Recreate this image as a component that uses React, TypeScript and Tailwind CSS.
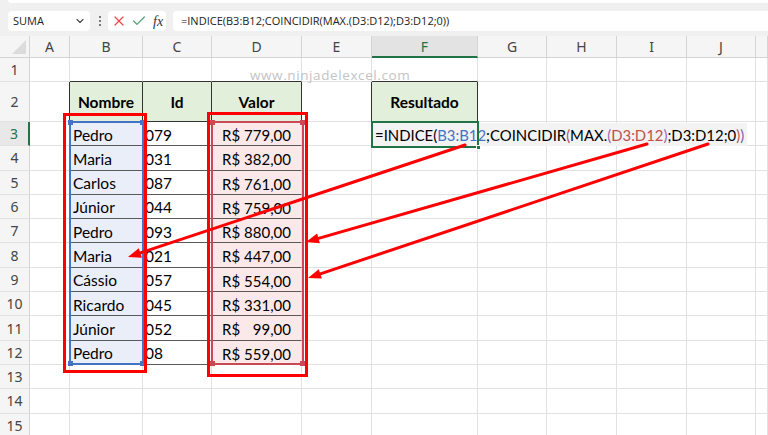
import { X, Check, ChevronDown } from "lucide-react"

const colWidths = [30, 40, 73, 69, 90, 70, 106, 69, 70, 70, 69, 12]
const letters = ["", "A", "B", "C", "D", "E", "F", "G", "H", "I", "J", ""]

const names = ["Pedro", "Maria", "Carlos", "Júnior", "Pedro", "Maria", "Cássio", "Ricardo", "Júnior", "Pedro"]
const ids = ["079", "031", "087", "044", "093", "021", "057", "045", "052", "08"]
const values = ["779,00", "382,00", "761,00", "759,00", "880,00", "447,00", "554,00", "331,00", "99,00", "559,00"]

function arrowHead(x1: number, y1: number, x2: number, y2: number, len = 13, w = 5) {
  const a = Math.atan2(y2 - y1, x2 - x1)
  const bx = x2 - len * Math.cos(a)
  const by = y2 - len * Math.sin(a)
  const px = -Math.sin(a) * w
  const py = Math.cos(a) * w
  return {
    base: [bx, by],
    points: `${x2},${y2} ${bx + px},${by + py} ${bx - px},${by - py}`,
  }
}

const arrows = [
  [465, 145, 128, 257],
  [647, 144, 306, 242],
  [708, 144, 308, 278],
]

function RowHeader({ n, h, active }: { n: number; h: string; active?: boolean }) {
  return (
    <div
      className={`${h} w-[30px] shrink-0 flex items-center justify-center border-b border-[#e1e1e1] text-[14px] font-['Noto_Sans',sans-serif] ${
        active ? "bg-[#e8e8e8] text-[#217346] border-r-2 border-r-[#217346]" : "bg-[#f5f5f5] text-[#444] border-r border-r-[#d4d4d4]"
      }`}
    >
      {n}
    </div>
  )
}

function Cell({ w, h, className = "", children }: { w: number; h: string; className?: string; children?: React.ReactNode }) {
  return (
    <div style={{ width: w }} className={`${h} shrink-0 border-r border-b border-[#e1e1e1] ${className}`}>
      {children}
    </div>
  )
}

export default function App() {
  const rowH = "h-[24.3px]"
  return (
    <div className="relative w-[768px] h-[435px] overflow-hidden bg-white font-['Lato',sans-serif] text-black">
      {/* formula bar */}
      <div className="h-[36px] bg-[#f0f0f0] flex flex-col">
        <div className="h-[3px] ml-[8px] bg-white rounded-bl-md" />
        <div className="mt-[8px] h-[20px] flex items-center">
          <div className="ml-[8px] w-[82px] h-full bg-white rounded-[4px] flex items-center justify-between pl-[5px] pr-[4px] text-[11px] font-['Open_Sans',sans-serif] text-[#222]">
            <span>SUMA</span>
            <ChevronDown size={12} strokeWidth={2.2} className="text-[#444]" />
          </div>
          <div className="ml-[8px] w-[4px] flex flex-col gap-[2px] items-center">
            <span className="w-[2px] h-[2px] bg-[#555] rounded-full" />
            <span className="w-[2px] h-[2px] bg-[#555] rounded-full" />
            <span className="w-[2px] h-[2px] bg-[#555] rounded-full" />
          </div>
          <div className="ml-[6px] w-[58px] h-full bg-white rounded-[4px] flex items-center pl-[3px] gap-[4px]">
            <X size={16} strokeWidth={1.8} color="#e8474c" />
            <Check size={16} strokeWidth={1.8} color="#4aa070" />
            <span className="font-['Liberation_Serif',serif] italic text-[14px] text-[#333] ml-[2px]">fx</span>
          </div>
          <div className="ml-[7px] flex-1 h-full bg-white rounded-l-[4px] flex items-center pl-[8px] text-[11px] font-['Open_Sans',sans-serif] text-[#222]">
            =INDICE(B3:B12;COINCIDIR(MAX.(D3:D12);D3:D12;0))
          </div>
        </div>
      </div>

      {/* column headers */}
      <div className="flex h-[22px]">
        {colWidths.map((w, i) => (
          <div
            key={i}
            style={{ width: w }}
            className={`shrink-0 flex items-center justify-center text-[14px] font-['Noto_Sans',sans-serif] border-r border-[#d4d4d4] ${
              i === 6 ? "bg-[#e3e3e3] text-[#217346] border-b-2 border-b-[#217346]" : "bg-[#f5f5f5] text-[#444] border-b border-b-[#d4d4d4]"
            } relative`}
          >
            {i === 0 ? (
              <span className="absolute right-[3px] bottom-[3px] w-0 h-0 border-l-[14px] border-l-transparent border-b-[14px] border-b-[#dcdcdc]" />
            ) : (
              letters[i]
            )}
          </div>
        ))}
      </div>

      {/* row 1 */}
      <div className="flex">
        <RowHeader n={1} h="h-[24px]" />
        {colWidths.slice(1).map((w, i) => (
          <Cell key={i} w={w} h="h-[24px]" className={i >= 1 && i <= 3 ? "border-b-[#333]" : i === 5 ? "border-b-[#333]" : ""} />
        ))}
      </div>

      {/* row 2 */}
      <div className="flex">
        <RowHeader n={2} h="h-[40px]" />
        <Cell w={40} h="h-[40px]" className="border-r-[#333]" />
        {["Nombre", "Id", "Valor"].map((t) => (
          <Cell key={t} w={t === "Nombre" ? 73 : t === "Id" ? 69 : 90} h="h-[40px]" className="bg-[#e2efda] border-r-[#333] border-b-[#333] flex items-center justify-center font-bold text-[15.5px] pt-[2px]">
            {t}
          </Cell>
        ))}
        <Cell w={70} h="h-[40px]" className="border-r-[#333]" />
        <Cell w={106} h="h-[40px]" className="bg-[#e2efda] border-r-[#333] border-b-[#333] flex items-center justify-center font-bold text-[15.5px] pt-[2px]">
          Resultado
        </Cell>
        {colWidths.slice(7).map((w, i) => (
          <Cell key={i} w={w} h="h-[40px]" />
        ))}
      </div>

      {/* data rows */}
      {names.map((name, r) => (
        <div key={r} className="flex">
          <RowHeader n={r + 3} h={rowH} active={r === 0} />
          <Cell w={40} h={rowH} />
          <Cell w={73} h={rowH} className="bg-[#e9eef8] border-b-[#595959] flex items-center pl-[3px] pt-[3px] text-[15.5px]">
            {name}
          </Cell>
          <Cell w={69} h={rowH} className="border-b-[#595959] flex items-center pl-[2px] pt-[3px] text-[15.5px]">
            {ids[r]}
          </Cell>
          <Cell w={90} h={rowH} className="bg-[#fbe9e9] border-b-[#595959] flex items-center justify-between pl-[10px] pr-[10px] pt-[3px] text-[15px]">
            <span>R$</span>
            <span>{values[r]}</span>
          </Cell>
          {colWidths.slice(5).map((w, i) => (
            <Cell key={i} w={w} h={rowH} />
          ))}
        </div>
      ))}

      {/* rows 13-15 */}
      {[13, 14, 15].map((n) => (
        <div key={n} className="flex">
          <RowHeader n={n} h={rowH} />
          {colWidths.slice(1).map((w, i) => (
            <Cell key={i} w={w} h={rowH} />
          ))}
        </div>
      ))}

      {/* watermark */}
      <div className="absolute left-[250px] top-[65px] text-[13.5px] tracking-[0.6px] text-[#c4c4c4] font-['Open_Sans',sans-serif]">
        www.ninjadelexcel.com
      </div>

      {/* formula in edit mode over F3 */}
      <div className="absolute left-[373px] top-[123px] w-[374px] h-[23px] bg-[#f3f3f3] flex items-center pl-[2px] pt-[2px] text-[14.9px] whitespace-nowrap">
        <span>=INDICE(</span>
        <span className="text-[#4472c4]">B3:B12</span>
        <span>;COINCIDIR</span>
        <span className="text-[#c0504d]">(</span>
        <span>MAX.</span>
        <span className="text-[#a064b4]">(</span>
        <span className="text-[#c0504d]">D3:D12</span>
        <span className="text-[#a064b4]">)</span>
        <span>;D3:D12;0</span>
        <span className="text-[#c0504d]">)</span>
        <span className="text-[#7b5ca8]">)</span>
      </div>
      <div className="absolute left-[371px] top-[121px] w-[108px] h-[27px] border-2 border-[#217346]">
        <span className="absolute -right-[4px] -bottom-[4px] w-[5px] h-[5px] bg-[#217346] border border-white" />
      </div>

      {/* reference highlights */}
      <div className="absolute left-[69px] top-[121px] w-[75px] h-[244px] border-2 border-[#4472c4]">
        <span className="absolute -left-[3px] -top-[3px] w-[5px] h-[5px] bg-[#4472c4]" />
        <span className="absolute -right-[3px] -top-[3px] w-[5px] h-[5px] bg-[#4472c4]" />
        <span className="absolute -left-[3px] -bottom-[3px] w-[5px] h-[5px] bg-[#4472c4]" />
        <span className="absolute -right-[3px] -bottom-[3px] w-[5px] h-[5px] bg-[#4472c4]" />
      </div>
      <div className="absolute left-[211px] top-[121px] w-[93px] h-[244px] border-2 border-[#c94a55]">
        <span className="absolute -left-[3px] -top-[3px] w-[5px] h-[5px] bg-[#c94a55]" />
        <span className="absolute -right-[3px] -top-[3px] w-[5px] h-[5px] bg-[#c94a55]" />
        <span className="absolute -left-[3px] -bottom-[3px] w-[5px] h-[5px] bg-[#c94a55]" />
        <span className="absolute -right-[3px] -bottom-[3px] w-[5px] h-[5px] bg-[#c94a55]" />
      </div>

      {/* annotations */}
      <svg className="absolute inset-0 pointer-events-none" width={768} height={435} viewBox="0 0 768 435">
        <rect x={64.5} y={114.5} width={81} height={257} fill="none" stroke="#ff0000" strokeWidth={3} />
        <rect x={208.5} y={113.5} width={98} height={262} fill="none" stroke="#ff0000" strokeWidth={3} />
        {arrows.map(([x1, y1, x2, y2], i) => {
          const h = arrowHead(x1, y1, x2, y2)
          return (
            <g key={i}>
              <line x1={x1} y1={y1} x2={h.base[0]} y2={h.base[1]} stroke="#ff0000" strokeWidth={3} strokeLinecap="round" />
              <polygon points={h.points} fill="#ff0000" />
            </g>
          )
        })}
      </svg>
    </div>
  )
}
